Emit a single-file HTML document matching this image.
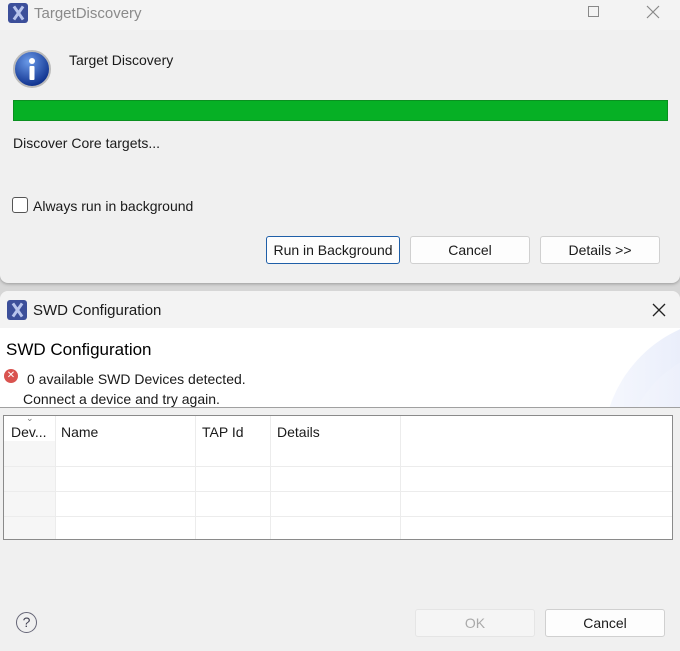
<!DOCTYPE html>
<html><head><style>
*{margin:0;padding:0;box-sizing:border-box}
body{width:680px;height:651px;background:#d6d6d6;font-family:"Liberation Sans",sans-serif;font-size:14px;color:#1a1a1a;position:relative;overflow:hidden}
.abs{position:absolute}
.btn{position:absolute;background:#fdfdfd;border:1px solid #d0d0d0;border-radius:3px;text-align:center;font-size:14px;line-height:26px;color:#1a1a1a}
.xlogo{position:absolute;width:20px;height:20px;background:#3c4f9a;border-radius:3px}
.xlogo:before,.xlogo:after{content:"";position:absolute;left:9px;top:2px;width:3px;height:16px;background:#b8c4ec;transform:rotate(35deg)}
.xlogo:after{transform:rotate(-35deg)}
</style></head><body>
<div class="abs" style="left:0;top:0;width:680px;height:283px;background:#f0f0f0;border-radius:0 0 8px 8px;box-shadow:0 1px 3px #999"></div>
<div class="abs" style="left:0;top:0;width:680px;height:30px;background:#f3f3f3"></div>
<div class="xlogo" style="left:8px;top:3px"></div>
<div class="abs" style="left:34px;top:5px;font-size:15px;color:#8a8a8a">TargetDiscovery</div>
<div class="abs" style="left:588px;top:6px;width:11px;height:11px;border:1px solid #888"></div>
<svg class="abs" style="left:646px;top:5px" width="14" height="14"><path d="M1 1L13 13M13 1L1 13" stroke="#888" stroke-width="1.2"/></svg>
<svg class="abs" style="left:12px;top:49px" width="40" height="40"><defs><radialGradient id="g" cx="40%" cy="30%" r="70%"><stop offset="0" stop-color="#6a9ae8"/><stop offset="1" stop-color="#0d2f8c"/></radialGradient></defs><circle cx="20" cy="20" r="18" fill="url(#g)" stroke="#bbb" stroke-width="2"/><circle cx="20" cy="12" r="3" fill="#fff"/><rect x="17.5" y="17" width="5" height="14" rx="1" fill="#fff"/></svg>
<div class="abs" style="left:69px;top:52px">Target Discovery</div>
<div class="abs" style="left:13px;top:100px;width:655px;height:21px;background:#06b025;border:1px solid #0a9020"></div>
<div class="abs" style="left:13px;top:135px">Discover Core targets...</div>
<div class="abs" style="left:12px;top:197px;width:16px;height:16px;border:1px solid #555;border-radius:3px;background:#fff"></div>
<div class="abs" style="left:33px;top:198px">Always run in background</div>
<div class="btn" style="left:266px;top:236px;width:134px;border:1px solid #1f5fa8">Run in Background</div>
<div class="btn" style="left:410px;top:236px;width:120px">Cancel</div>
<div class="btn" style="left:540px;top:236px;width:120px">Details &gt;&gt;</div>
<div class="abs" style="left:0;top:291px;width:680px;height:360px;background:#f0f0f0;border-radius:8px 8px 0 0"></div>
<div class="abs" style="left:0;top:291px;width:680px;height:37px;background:#f3f3f3;border-radius:8px 8px 0 0"></div>
<div class="xlogo" style="left:7px;top:300px"></div>
<div class="abs" style="left:33px;top:302px;font-size:15px">SWD Configuration</div>
<svg class="abs" style="left:652px;top:303px" width="14" height="14"><path d="M1 1L13 13M13 1L1 13" stroke="#222" stroke-width="1.3"/></svg>
<div class="abs" style="left:0;top:328px;width:680px;height:80px;background:#fff;overflow:hidden">
<div class="abs" style="left:603px;top:-10px;width:260px;height:260px;border-radius:50%;background:linear-gradient(90deg,#f6f8fe,#cdd7f2)"></div>
<div class="abs" style="left:625px;top:20px;width:220px;height:220px;border-radius:50%;background:linear-gradient(90deg,#f4f6fd,#d6def5)"></div>
</div>
<div class="abs" style="left:6px;top:340px;font-size:17px;color:#000">SWD Configuration</div>
<div class="abs" style="left:4px;top:369px;width:14px;height:14px;border-radius:50%;background:#d9534f;color:#fff;font-size:10px;line-height:14px;text-align:center">✕</div>
<div class="abs" style="left:27px;top:371px">0 available SWD Devices detected.</div>
<div class="abs" style="left:23px;top:391px">Connect a device and try again.</div>
<div class="abs" style="left:0;top:407px;width:680px;height:1px;background:#a0a0a0"></div>
<div class="abs" style="left:3px;top:415px;width:670px;height:125px;background:#fff;border:1px solid #8a8a8a"></div>
<div class="abs" style="left:4px;top:441px;width:51px;height:98px;background:#f6f6f6"></div>
<div class="abs" style="left:4px;top:466px;width:668px;height:1px;background:#ececec"></div>
<div class="abs" style="left:4px;top:491px;width:668px;height:1px;background:#ececec"></div>
<div class="abs" style="left:4px;top:516px;width:668px;height:1px;background:#ececec"></div>
<div class="abs" style="left:55px;top:416px;width:1px;height:123px;background:#ececec"></div>
<div class="abs" style="left:195px;top:416px;width:1px;height:123px;background:#ececec"></div>
<div class="abs" style="left:270px;top:416px;width:1px;height:123px;background:#ececec"></div>
<div class="abs" style="left:400px;top:416px;width:1px;height:123px;background:#ececec"></div>
<div class="abs" style="left:26px;top:413px;font-size:9px;color:#777">⌄</div>
<div class="abs" style="left:11px;top:424px">Dev...</div>
<div class="abs" style="left:61px;top:424px">Name</div>
<div class="abs" style="left:202px;top:424px">TAP Id</div>
<div class="abs" style="left:277px;top:424px">Details</div>
<div class="abs" style="left:16px;top:612px;width:21px;height:21px;border:1.5px solid #667;border-radius:50%;text-align:center;font-size:14px;line-height:18px;color:#445">?</div>
<div class="btn" style="left:415px;top:609px;width:120px;background:#f5f5f5;border-color:#e5e5e5;color:#aaa">OK</div>
<div class="btn" style="left:545px;top:609px;width:120px">Cancel</div>
</body></html>
